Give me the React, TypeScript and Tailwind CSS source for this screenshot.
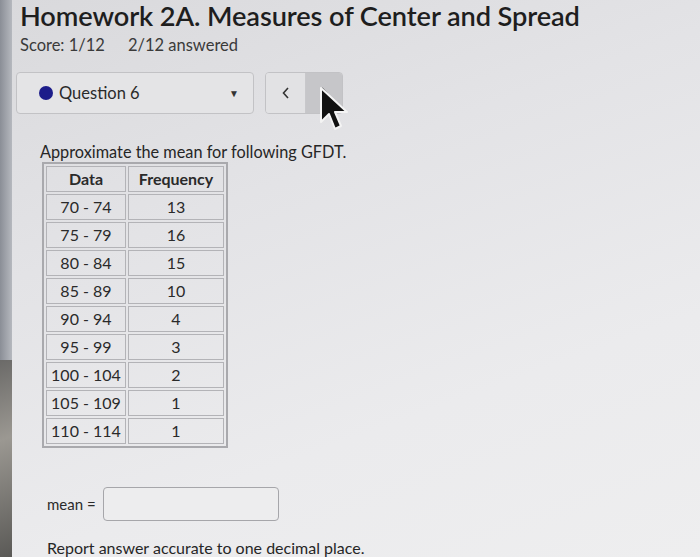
import React from "react";

const rows: [string, string][] = [
  ["70 - 74", "13"],
  ["75 - 79", "16"],
  ["80 - 84", "15"],
  ["85 - 89", "10"],
  ["90 - 94", "4"],
  ["95 - 99", "3"],
  ["100 - 104", "2"],
  ["105 - 109", "1"],
  ["110 - 114", "1"],
];

export default function App() {
  return (
    <div
      className="relative w-[700px] h-[557px] overflow-hidden flex bg-[linear-gradient(160deg,#d9d9dc_0%,#e3e3e6_35%,#ebebed_70%,#eeeeef_100%)] text-[#222]"
      style={{ fontFamily: "Lato, 'Open Sans', sans-serif" }}
    >
      {/* left bezel */}
      <div className="w-[12px] shrink-0 flex flex-col">
        <div className="h-[360px] bg-[linear-gradient(90deg,#8a8e96,#b5b8be)]" />
        <div className="flex-1 bg-[linear-gradient(160deg,#6b6a68,#9b9892_40%,#5a5956)]" />
      </div>

      <div className="flex-1 flex flex-col pl-[8px]">
        <h1 className="text-[27.2px] leading-[30px] font-semibold text-[#1e1e1e] mt-[1px] tracking-[-0.1px]">
          Homework 2A. Measures of Center and Spread
        </h1>
        <div className="flex gap-[23px] text-[16.5px] leading-[20px] text-[#3a3a3a] mt-[4px]">
          <span>Score: 1/12</span>
          <span>2/12 answered</span>
        </div>

        <div className="h-[2px] bg-[#c9c9cc] mt-[11px] -ml-[4px]" />

        <div className="flex items-center mt-[6px] -ml-[4px]">
          <div className="w-[238px] h-[42px] rounded-[4px] border border-[#c2c2c5] bg-[#e4e4e6] flex items-center pl-[22px] pr-[12px]">
            <span className="w-[14px] h-[14px] rounded-full bg-[#1d1d8a]" />
            <span className="ml-[6px] text-[16.5px] text-[#2a2a2a]">Question 6</span>
            <span className="ml-auto mr-[2px] text-[10px] text-[#333]">▼</span>
          </div>
          <div className="ml-[11px] w-[78px] h-[42px] rounded-[4px] border border-[#c2c2c5] flex overflow-hidden">
            <div className="w-[40px] bg-[#e2e2e4] flex items-center justify-center border-r border-[#c8c8cb]">
              <svg width="10" height="14" viewBox="0 0 10 14">
                <path d="M7 2 L2.5 7 L7 12" fill="none" stroke="#333" strokeWidth="1.6" />
              </svg>
            </div>
            <div className="flex-1 bg-[#c6c6c9] flex items-center justify-center">
              <svg width="10" height="14" viewBox="0 0 10 14">
                <path d="M3 2 L7.5 7 L3 12" fill="none" stroke="#333" strokeWidth="1.6" />
              </svg>
            </div>
          </div>
        </div>

        <div className="h-[2px] bg-[#cfcfd2] mt-[4px] -ml-[4px]" />

        <div className="pl-[20px] mt-[24px]">
          <p className="text-[16.3px] leading-[20px] text-[#262626]">
            Approximate the mean for following GFDT.
          </p>
          <table className="ml-[2px] mt-[0px] border-separate border-spacing-[2px] border-2 border-[#a9a9ad] text-[16px] text-[#2a2a2a]">
            <thead>
              <tr>
                <th className="w-[80px] h-[26px] border border-[#b3b3b7] font-bold text-center">Data</th>
                <th className="w-[96px] h-[26px] border border-[#b3b3b7] font-bold text-center px-[4px]">Frequency</th>
              </tr>
            </thead>
            <tbody>
              {rows.map(([d, f]) => (
                <tr key={d}>
                  <td className="h-[26px] border border-[#b3b3b7] text-center">{d}</td>
                  <td className="h-[26px] border border-[#b3b3b7] text-center">{f}</td>
                </tr>
              ))}
            </tbody>
          </table>

          <div className="flex items-center mt-[39px] ml-[7px]">
            <span className="text-[15px] text-[#2a2a2a]">mean =</span>
            <div className="ml-[7px] w-[176px] h-[34px] rounded-[4px] border border-[#a6a6aa] bg-[#ededee]" />
          </div>

          <p className="mt-[17px] ml-[7px] text-[16px] leading-[20px] text-[#262626]">
            Report answer accurate to one decimal place.
          </p>
        </div>
      </div>

      {/* mouse cursor overlay */}
      <svg
        className="absolute left-[318px] top-[86px]"
        width="34"
        height="48"
        viewBox="0 0 34 48"
      >
        <path
          d="M3 2 L3 36 L11 28 L17 43 L23 40 L17 26 L29 26 Z"
          fill="#111"
          stroke="#f4f4f4"
          strokeWidth="2"
          strokeLinejoin="round"
        />
      </svg>
    </div>
  );
}
